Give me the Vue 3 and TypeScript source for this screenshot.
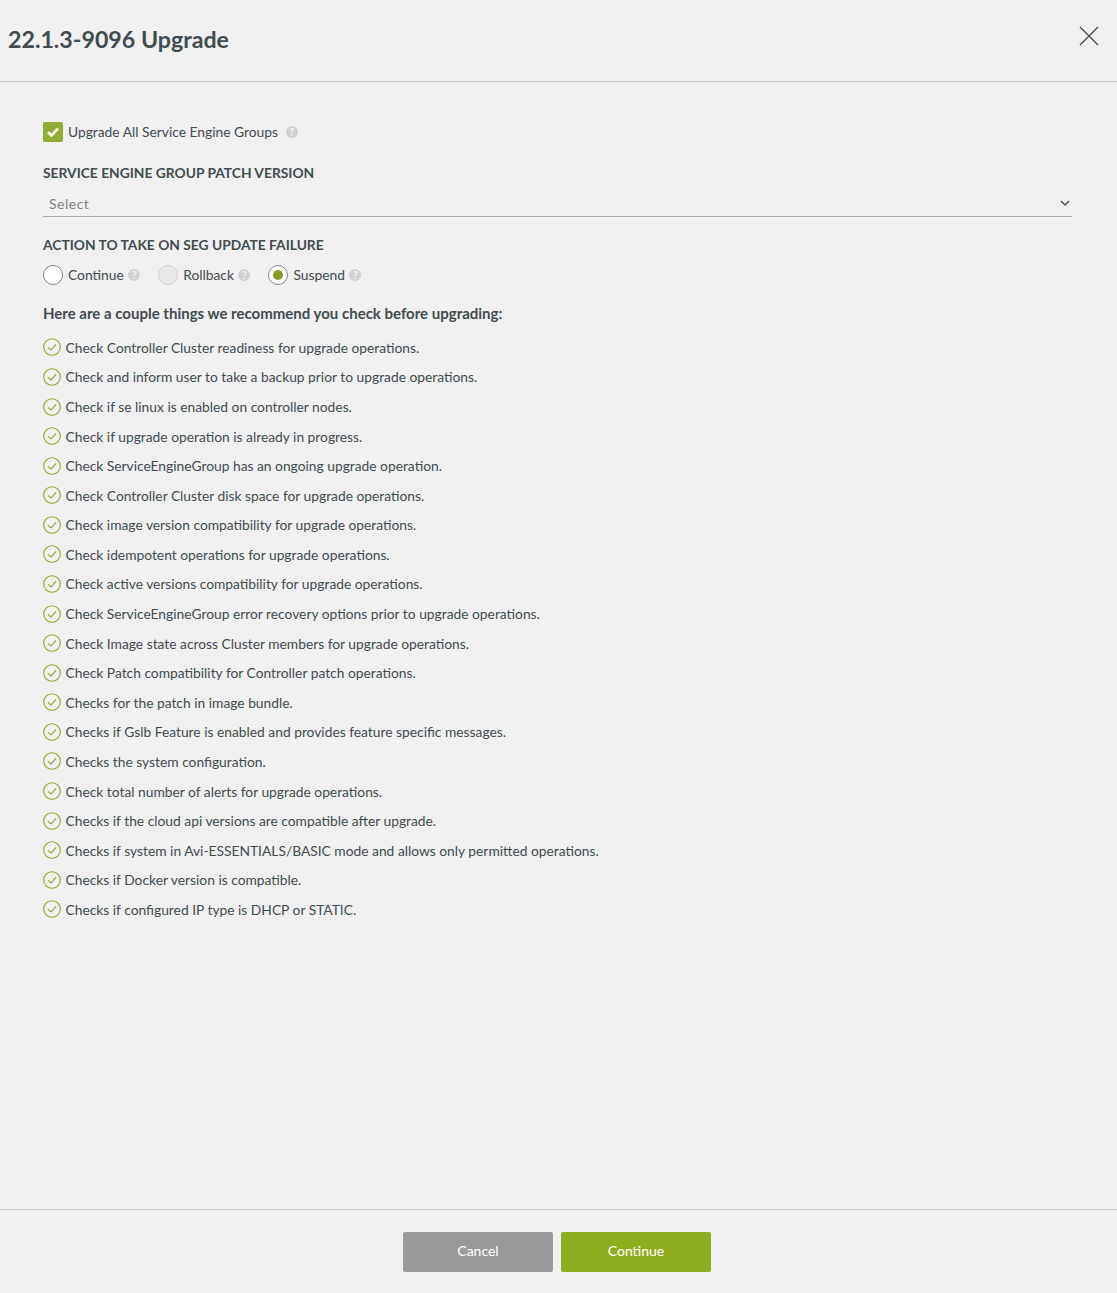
<script setup lang="ts">
const checks: string[] = [
  'Check Controller Cluster readiness for upgrade operations.',
  'Check and inform user to take a backup prior to upgrade operations.',
  'Check if se linux is enabled on controller nodes.',
  'Check if upgrade operation is already in progress.',
  'Check ServiceEngineGroup has an ongoing upgrade operation.',
  'Check Controller Cluster disk space for upgrade operations.',
  'Check image version compatibility for upgrade operations.',
  'Check idempotent operations for upgrade operations.',
  'Check active versions compatibility for upgrade operations.',
  'Check ServiceEngineGroup error recovery options prior to upgrade operations.',
  'Check Image state across Cluster members for upgrade operations.',
  'Check Patch compatibility for Controller patch operations.',
  'Checks for the patch in image bundle.',
  'Checks if Gslb Feature is enabled and provides feature specific messages.',
  'Checks the system configuration.',
  'Check total number of alerts for upgrade operations.',
  'Checks if the cloud api versions are compatible after upgrade.',
  'Checks if system in Avi-ESSENTIALS/BASIC mode and allows only permitted operations.',
  'Checks if Docker version is compatible.',
  'Checks if configured IP type is DHCP or STATIC.',
]
const radios = [
  { label: 'Continue', kind: 'empty' },
  { label: 'Rollback', kind: 'disabled' },
  { label: 'Suspend', kind: 'selected' },
]
</script>

<template>
  <div class="modal">
    <header class="head">
      <h1 class="title">22.1.3-9096 Upgrade</h1>
      <button class="close" type="button" aria-label="Close">
        <svg width="20" height="20" viewBox="0 0 20 20"><path d="M1 1 L19 19 M19 1 L1 19" stroke="#3f4a4d" stroke-width="1.3" fill="none" /></svg>
      </button>
    </header>

    <main class="body">
      <label class="upgrade-all">
        <span class="checkbox">
          <svg width="14" height="12" viewBox="0 0 14 12"><path d="M2 6.2 L5.4 9.4 L12 2.6" stroke="#fff" stroke-width="2.6" fill="none" /></svg>
        </span>
        <span class="opt-label">Upgrade All Service Engine Groups</span>
        <span class="help help-first">?</span>
      </label>

      <div class="field-label first-label">SERVICE ENGINE GROUP PATCH VERSION</div>
      <div class="select">
        <span>Select</span>
        <svg width="10" height="7" viewBox="0 0 10 7"><path d="M1 1 L5 5 L9 1" stroke="#4a5558" stroke-width="1.5" fill="none" /></svg>
      </div>

      <div class="field-label second-label">ACTION TO TAKE ON SEG UPDATE FAILURE</div>
      <div class="radios">
        <label v-for="r in radios" :key="r.label" class="radio-item">
          <span class="radio" :class="r.kind"></span>
          <span class="opt-label">{{ r.label }}</span>
          <span class="help">?</span>
        </label>
      </div>

      <p class="intro">Here are a couple things we recommend you check before upgrading:</p>

      <ul class="checks">
        <li v-for="c in checks" :key="c" class="check">
          <svg width="18" height="18" viewBox="0 0 18 18">
            <circle cx="9" cy="9" r="8.3" stroke="#8aa825" stroke-width="1.1" fill="none" />
            <path d="M5 9.3 L8 12 L13 6.4" stroke="#8aa825" stroke-width="1.1" fill="none" />
          </svg>
          <span>{{ c }}</span>
        </li>
      </ul>
    </main>

    <footer class="foot">
      <button class="btn cancel" type="button">Cancel</button>
      <button class="btn go" type="button">Continue</button>
    </footer>
  </div>
</template>

<style>
html, body { margin: 0; background: #f0f0f0; }
</style>

<style scoped>
.modal {
  width: 1117px;
  height: 1293px;
  display: flex;
  flex-direction: column;
  background: #f0f0f0;
  color: #414c4f;
  font-family: Lato, "Open Sans", sans-serif;
  font-size: 14px;
  overflow: hidden;
}
.head {
  height: 82px;
  flex: none;
  box-sizing: border-box;
  border-bottom: 1px solid #c4c4c4;
  display: flex;
  justify-content: space-between;
  padding: 0 18px 0 8px;
}
.title {
  margin: 25px 0 0;
  font-size: 23.2px;
  line-height: 28px;
  font-weight: 700;
  color: #414c4f;
}
.close {
  margin-top: 26px;
  width: 20px;
  height: 20px;
  padding: 0;
  border: 0;
  background: none;
  display: block;
}
.body {
  flex: 1;
  padding: 40px 45px 0 43px;
}
.upgrade-all { display: flex; align-items: center; height: 20px; }
.checkbox {
  width: 20px;
  height: 20px;
  border-radius: 2px;
  background: #8fae33;
  display: flex;
  align-items: center;
  justify-content: center;
}
.opt-label { margin-left: 5px; font-size: 13.8px; line-height: 20px; }
.help {
  width: 12px;
  height: 12px;
  border-radius: 50%;
  background: #d0d2d2;
  color: #f0f0f0;
  font-size: 11px;
  line-height: 12px;
  font-weight: 900;
  text-align: center;
  margin-left: 4.5px;
}
.help-first { margin-left: 8px; }
.field-label { font-size: 13.8px; font-weight: 700; line-height: 18px; color: #414c4f; }
.first-label { margin-top: 22px; }
.second-label { margin-top: 19px; }
.select {
  margin-top: 10px;
  height: 25px;
  box-sizing: border-box;
  border-bottom: 1px solid #aaa;
  display: flex;
  align-items: center;
  justify-content: space-between;
  padding: 0 2px 2px 6px;
  color: #7d8486;
  font-size: 14px;
  letter-spacing: 0.5px;
}
.radios { display: flex; gap: 18px; margin-top: 11px; }
.radio-item { display: flex; align-items: center; height: 20px; }
.radio {
  width: 20px;
  height: 20px;
  box-sizing: border-box;
  border-radius: 50%;
  border: 1px solid #7e8587;
  background: #fff;
  position: relative;
}
.radio.disabled { background: #e8e8e8; border-color: #d2d2d2; }
.radio.selected::after {
  content: "";
  position: absolute;
  left: 4px;
  top: 4px;
  width: 10px;
  height: 10px;
  border-radius: 50%;
  background: #7f9e23;
}
.intro { margin: 19.4px 0 0; font-size: 15px; line-height: 18px; font-weight: 700; }
.checks { list-style: none; margin: 10.2px 0 0; padding: 0; }
.check {
  height: 29.58px;
  display: flex;
  align-items: center;
  font-size: 13.8px;
}
.check svg { flex: none; margin-right: 4.5px; }
.foot {
  height: 84px;
  flex: none;
  box-sizing: border-box;
  border-top: 1px solid #c8c8c8;
  display: flex;
  justify-content: center;
  gap: 8px;
  padding: 22px 3px 0 0;
}
.btn {
  width: 150px;
  height: 40px;
  border: 0;
  border-radius: 2px;
  color: #fff;
  font-family: inherit;
  font-size: 14px;
  padding: 0 0 3px;
}
.cancel { background: #999999; }
.go { background: #8fae1f; }
</style>
